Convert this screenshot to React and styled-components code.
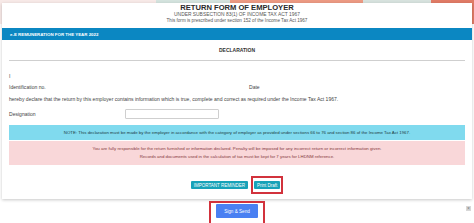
import React from 'react';
import styled, { createGlobalStyle } from 'styled-components';

const GlobalStyle = createGlobalStyle`
  html, body {
    margin: 0;
    padding: 0;
    background: #fff;
  }
  body {
    font-family: "Liberation Sans", Arial, sans-serif;
  }
`;

const Page = styled.div`
  width: 474px;
  height: 223px;
  overflow: hidden;
  box-sizing: border-box;
  padding: 3px 2px 0 2px;
  background:
    linear-gradient(
        90deg,
        #f7e9e7 0 33%,
        #d4e3de 33% 48.5%,
        #ec9a83 48.5% 76.5%,
        #d7e2de 76.5% 91%,
        #e07b66 91%
      )
      top / 100% 24px no-repeat,
    #fff;
`;

const Card = styled.div`
  background: #fff;
  height: 196px;
  box-shadow: 0 1px 3px rgba(0, 0, 0, 0.22);
  display: flex;
  flex-direction: column;
`;

const Header = styled.div`
  text-align: center;
  color: #333;
`;

const Title = styled.div`
  font-size: 7.6px;
  font-weight: 700;
  line-height: 9px;
  color: #2b2b2b;
`;

const SubLine = styled.div`
  font-size: ${(p) => p.size || '4.8px'};
  line-height: 6px;
  color: #555;
`;

const Bar = styled.div`
  margin-top: 4px;
  height: 12px;
  background: #0b87c2;
  color: #fff;
  font-size: 4.4px;
  font-weight: 700;
  padding-left: 8px;
  display: flex;
  align-items: center;
`;

const Body = styled.div`
  padding: 0 7px;
  color: #444;
  font-size: 5.05px;
`;

const Heading = styled.div`
  margin-top: 5px;
  line-height: 10px;
  text-align: center;
  font-weight: 700;
  font-size: 5px;
  color: #333;
`;

const Rule = styled.div`
  margin-top: 5px;
  border-top: 1px solid #cfcfcf;
`;

const Row = styled.div`
  margin-top: ${(p) => p.gap || 3}px;
  line-height: 8px;
  display: grid;
  grid-template-columns: ${(p) => p.cols || '1fr'};
  align-items: center;
`;

const Input = styled.div`
  height: 8px;
  border: 1px solid #cfcfcf;
  border-radius: 1px;
  background: #fff;
`;

const Alert = styled.div`
  text-align: center;
  font-size: 4.35px;
  line-height: 8px;
  background: ${(p) => (p.kind === 'info' ? '#80daee' : '#f9d7d9')};
  color: ${(p) => (p.kind === 'info' ? '#1d3d44' : '#84373c')};
  padding: ${(p) => (p.kind === 'info' ? '3.5px 0' : '4px 0')};
  margin-top: ${(p) => p.gap || 0}px;
`;

const Actions = styled.div`
  margin-top: 11px;
  display: flex;
  justify-content: center;
  align-items: center;
  gap: 3px;
`;

const Button = styled.div`
  height: ${(p) => (p.big ? 14 : 8)}px;
  padding: 0 ${(p) => (p.big ? 8 : 3)}px;
  background: ${(p) => (p.primary ? '#4a80f2' : '#17a2b8')};
  color: #fff;
  font-size: ${(p) => (p.big ? 4.6 : 4.5)}px;
  display: flex;
  align-items: center;
  justify-content: center;
  white-space: nowrap;
  border-radius: 1px;
`;

const Highlight = styled.div`
  border: 2px solid #d2323c;
  padding: ${(p) => p.pad};
  background: #fff;
`;

const Footer = styled.div`
  position: relative;
  margin-top: 2px;
  display: flex;
  justify-content: center;
`;

const Close = styled.div`
  position: absolute;
  right: 1px;
  top: 5px;
  width: 5px;
  height: 5px;
  background: #d8d8d8;
  color: #777;
  font-size: 5px;
  line-height: 5px;
  text-align: center;
`;

export default function App() {
  return (
    <Page>
      <GlobalStyle />
      <Card>
        <Header>
          <Title>RETURN FORM OF EMPLOYER</Title>
          <SubLine size="4.9px">UNDER SUBSECTION 83(1) OF INCOME TAX ACT 1967</SubLine>
          <SubLine size="4.6px">
            This form is prescribed under section 152 of the Income Tax Act 1967
          </SubLine>
        </Header>
        <Bar>e-E REMUNERATION FOR THE YEAR 2022</Bar>
        <Body>
          <Heading>DECLARATION</Heading>
          <Rule />
          <Row gap={11}>I</Row>
          <Row cols="240px 1fr">
            <span>Identification no.</span>
            <span>Date</span>
          </Row>
          <Row gap={4}>
            hereby declare that the return by this employer contains information which is
            true, complete and correct as required under the Income Tax Act 1967.
          </Row>
          <Row gap={6} cols="116px 94px">
            <span>Designation</span>
            <Input />
          </Row>
          <Alert kind="info" gap={6}>
            NOTE: This declaration must be made by the employer in accordance with the category
            of employer as provided under sections 66 to 76 and section 86 of the Income Tax Act
            1967.
          </Alert>
          <Alert kind="danger" gap={1}>
            You are fully responsible for the return furnished or information declared. Penalty
            will be imposed for any incorrect return or incorrect information given.
            <br />
            Records and documents used in the calculation of tax must be kept for 7 years for
            LHDNM reference.
          </Alert>
          <Actions>
            <Button>IMPORTANT REMINDER</Button>
            <Highlight pad="3px 1px">
              <Button>Print Draft</Button>
            </Highlight>
          </Actions>
        </Body>
      </Card>
      <Footer>
        <Highlight pad="1px 5px 6px">
          <Button big primary>
            Sign &amp; Send
          </Button>
        </Highlight>
        <Close>×</Close>
      </Footer>
    </Page>
  );
}
